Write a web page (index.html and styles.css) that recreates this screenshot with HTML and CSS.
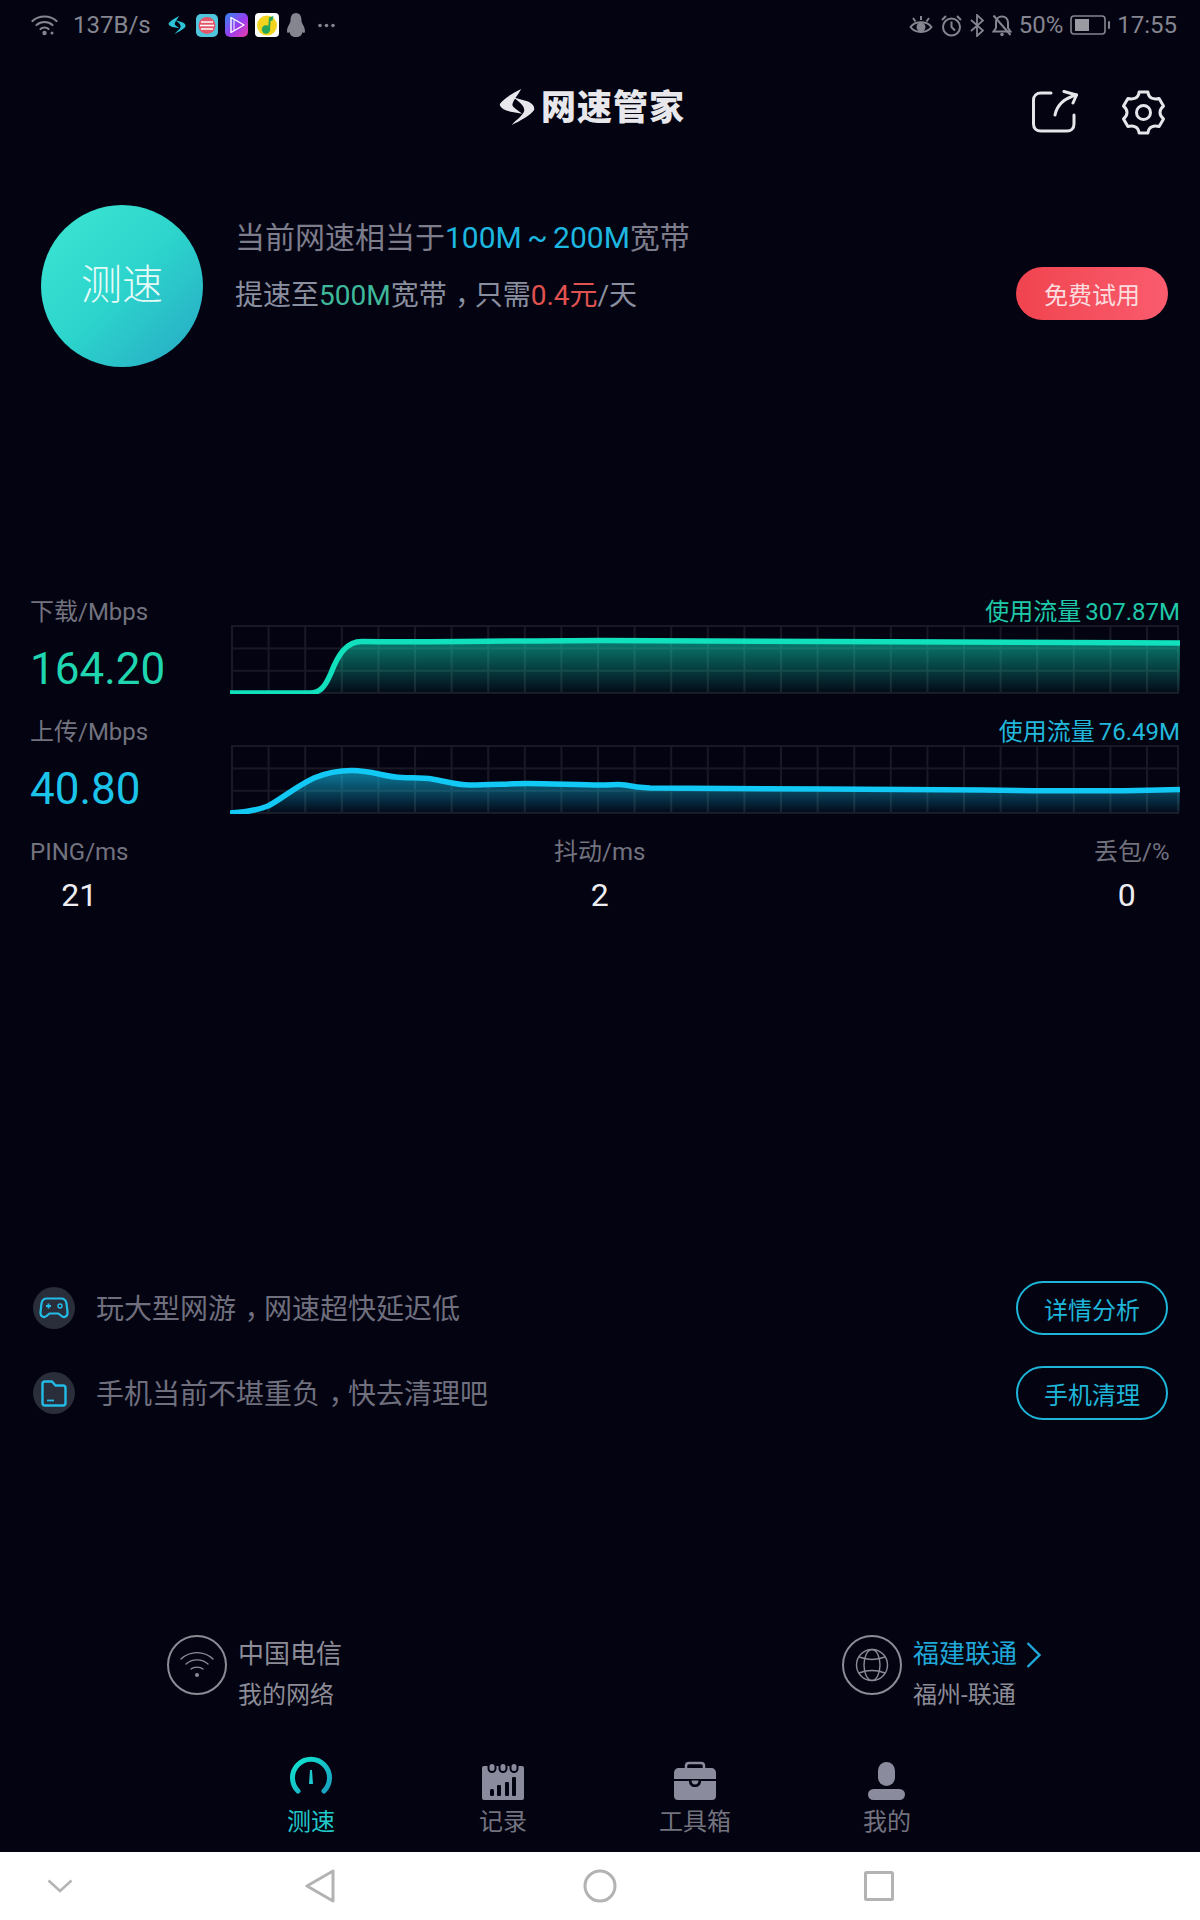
FILE: index.html
```html
<!DOCTYPE html>
<html lang="zh-CN">
<head>
    <meta charset="UTF-8">
    <meta name="viewport" content="width=device-width, initial-scale=1.0">
    <title>网速管家</title>
    <link rel="stylesheet" href="styles.css">
</head>
<body>
<div class="screen">

    <!-- status bar -->
    <div class="status-bar">
        <div class="status-left">
            <svg class="ic-wifi" width="27" height="22" viewBox="0 0 27 22" fill="none" stroke="#85858f" stroke-width="2.2" stroke-linecap="round">
                <path d="M1.5 7C8 1 19 1 25.5 7"/>
                <path d="M5.5 11C10 7 17 7 21.5 11"/>
                <path d="M9.5 15C11.5 13 15.5 13 17.5 15"/>
                <circle cx="13.5" cy="19" r="2.2" fill="#85858f" stroke="none"/>
                <circle cx="21" cy="19" r="1.5" fill="#85858f" stroke="none"/>
            </svg>
            <span class="net-speed">137B/s</span>
            <svg class="ic-mark-small" width="18" height="18" viewBox="0 0 34 35"><use href="#brand-mark"/></svg>
            <svg class="ic-app" width="22" height="23" viewBox="0 0 22 23">
                <rect width="22" height="23" rx="5" fill="#4fc6dc"/>
                <circle cx="11" cy="11.500" r="8.500" fill="#e4566a"/>
                <path d="M5 8H17M4 11.500H18M5 15H17" stroke="#fff" stroke-width="1.600"/>
            </svg>
            <svg class="ic-app" width="23" height="24" viewBox="0 0 23 24" fill="none">
                <defs>
                    <linearGradient id="video-grad" x1="0" y1="0" x2="1" y2="1">
                        <stop offset="0" stop-color="#2f86f0"/>
                        <stop offset="0.55" stop-color="#9a3cf0"/>
                        <stop offset="1" stop-color="#f03ca0"/>
                    </linearGradient>
                </defs>
                <rect width="23" height="24" rx="5" fill="url(#video-grad)"/>
                <path d="M6 4.500V19.500L19 12Z" stroke="#fff" stroke-width="1.400" stroke-linejoin="round"/>
                <path d="M9 6V18" stroke="#fff" stroke-width="1"/>
            </svg>
            <svg class="ic-app" width="24" height="24" viewBox="0 0 24 24">
                <rect width="24" height="24" rx="4" fill="#fff"/>
                <circle cx="12" cy="12.500" r="10" fill="#f2d31e"/>
                <circle cx="11" cy="16.500" r="4.200" fill="#25a55a"/>
                <path d="M13 16L14 4.500L18.500 3L17.500 7.500L15.500 8L15 16Z" fill="#25a55a"/>
            </svg>
            <svg class="ic-app" width="20" height="24" viewBox="0 0 20 24" fill="#85858f">
                <path d="M10 0C14.500 0 15.500 4 15.500 8C15.500 10 19 14 19 18C19 20 18 20.500 17 19.500L16.500 19C16 22 14 24 10 24C6 24 4 22 3.500 19L3 19.500C2 20.500 1 20 1 18C1 14 4.500 10 4.500 8C4.500 4 5.500 0 10 0Z"/>
            </svg>
            <svg class="ic-dots" width="17" height="5" viewBox="0 0 17 5" fill="#85858f">
                <circle cx="2" cy="2.500" r="1.800"/>
                <circle cx="8.500" cy="2.500" r="1.800"/>
                <circle cx="15" cy="2.500" r="1.800"/>
            </svg>
        </div>
        <div class="status-right">
            <svg width="24" height="22" viewBox="0 0 24 22" fill="none" stroke="#85858f" stroke-width="2">
                <path d="M1.500 13C6 6.500 18 6.500 22.500 13C18 19.500 6 19.500 1.500 13Z"/>
                <circle cx="12" cy="13" r="4.500" fill="#85858f" stroke="none"/>
                <path d="M4 4L6.500 7.500M20 4L17.500 7.500M12 2V6"/>
            </svg>
            <svg width="21" height="23" viewBox="0 0 21 23" fill="none" stroke="#85858f" stroke-width="2">
                <circle cx="10.500" cy="13" r="8.500"/>
                <path d="M10.500 7.500V13L14 16.500M1 6L5 2M20 6L16 2"/>
            </svg>
            <svg class="ic-bt" width="14" height="23" viewBox="0 0 14 23" fill="none" stroke="#85858f" stroke-width="1.800">
                <path d="M1 6L13 16.500L7 22V1L13 6.500L1 17"/>
            </svg>
            <svg class="ic-bell" width="20" height="23" viewBox="0 0 20 23" fill="none" stroke="#85858f" stroke-width="2">
                <path d="M4 8.500C4 5 6.500 2.500 10 2.500C13.500 2.500 16 5 16 9V14L18.500 17.500H1.500L4 14Z"/>
                <circle cx="10" cy="20.500" r="1.800" fill="#85858f" stroke="none"/>
                <path d="M1.500 1.500L18.500 21"/>
            </svg>
            <span class="battery-pct">50%</span>
            <svg class="ic-battery" width="40" height="20" viewBox="0 0 40 20" fill="none">
                <rect x="1" y="1" width="34" height="18" rx="3" stroke="#85858f" stroke-width="1.600"/>
                <rect x="5" y="4" width="14" height="12" fill="#9a9aa2"/>
                <rect x="38" y="6" width="2" height="8" rx="1" fill="#85858f"/>
            </svg>
            <span class="clock">17:55</span>
        </div>
    </div>

    <!-- title -->
    <div class="title-bar">
        <div></div>
        <div class="brand">
            <svg class="brand-icon" width="36" height="36" viewBox="0 0 34 35">
                <defs>
                    <symbol id="brand-mark" viewBox="0 0 34 35">
                        <path d="M21 0C13 4 4 9 0 15C2 20 7 21 11 22L22 24C17 20 13 18 12.500 15.500C13 11 18 6 21 0Z"/>
                        <path d="M13 8L27 12C32 14 34 17 34 20C30 26 20 31 12 35C16 30 22 27 24 21.500C25 17 19 12 13 8Z"/>
                    </symbol>
                </defs>
                <use href="#brand-mark"/>
            </svg>
            <span class="brand-name">网速管家</span>
        </div>
        <div class="title-actions">
            <svg width="46" height="43" viewBox="0 0 46 43" fill="none" stroke="#e6e6ea" stroke-width="3" stroke-linecap="round" stroke-linejoin="round">
                <path d="M19 3H9C4.500 3 1.500 6 1.500 10V34C1.500 38.500 4.500 41 9 41H35C39 41 42 38.500 42 34V25"/>
                <path d="M23 25C25 15 33 8 44.500 5"/>
                <path d="M32 1.500L44.500 5L41 13"/>
            </svg>
            <svg width="45" height="45" viewBox="0 0 45 45" fill="none" stroke="#e6e6ea" stroke-width="3" stroke-linejoin="round">
                <path d="M18.100 2L26.900 2Q27.500 6.800 30.750 8.200Q34 9.500 38.100 8.450L42.500 16Q39 19 39 22.500Q39 26 42.500 29L38.100 36.550Q34 35.500 30.750 36.800Q27.500 38.200 26.900 43L18.100 43Q17.500 38.200 14.250 36.800Q11 35.500 6.900 36.550L2.500 29Q6 26 6 22.500Q6 19 2.500 16L6.900 8.450Q11 9.500 14.250 8.200Q17.500 6.800 18.100 2Z"/>
                <circle cx="22.500" cy="22.500" r="7"/>
            </svg>
        </div>
    </div>

    <!-- promo -->
    <div class="promo">
        <div class="test-btn">测速</div>
        <div class="promo-text">
            <p class="promo-line1">当前网速相当于<span class="c-blue range">100M ~ 200M</span>宽带</p>
            <p class="promo-line2">提速至<span class="c-green">500M</span>宽带<span class="comma">，</span>只需<span class="c-red">0.4元</span>/天</p>
        </div>
        <button class="trial-btn">免费试用</button>
    </div>

    <!-- speed charts -->
    <div class="speed">
        <div class="speed-row">
            <div class="speed-info">
                <div class="label">下载/Mbps</div>
                <div class="speed-value c-down">164.20</div>
            </div>
            <div class="speed-chart">
                <div class="traffic c-down-text">使用流量 307.87M</div>
                <svg class="chart" width="950" height="69" viewBox="230 625 950 69" fill="none">
                    <defs>
                        <pattern id="grid-down" x="231" y="625" width="36.600" height="22.400" patternUnits="userSpaceOnUse">
                            <path d="M1 22.400V1H36.600" stroke="#191925" stroke-width="2"/>
                        </pattern>
                        <linearGradient id="fill-down" x1="0" y1="0" x2="0" y2="1">
                            <stop offset="0" stop-color="#0ee0be" stop-opacity="0.55"/>
                            <stop offset="1" stop-color="#0ee0be" stop-opacity="0.03"/>
                        </linearGradient>
                    </defs>
                    <rect x="232" y="626" width="946" height="67" fill="url(#grid-down)" stroke="#191925" stroke-width="2"/>
                    <path d="M310 693C320 693 325 687 331 673C338 655 346 641.500 362 641.500C420 642.500 480 641 600 640.500C700 641 900 642.500 1180 643V693Z" fill="url(#fill-down)"/>
                    <path d="M230 693H310C320 693 325 687 331 673C338 655 346 641.500 362 641.500C420 642.500 480 641 600 640.500C700 641 900 642.500 1180 643" stroke="#10e0bc" stroke-width="5.500"/>
                </svg>
            </div>
        </div>
        <div class="speed-row">
            <div class="speed-info">
                <div class="label">上传/Mbps</div>
                <div class="speed-value c-up">40.80</div>
            </div>
            <div class="speed-chart">
                <div class="traffic c-up-text">使用流量 76.49M</div>
                <svg class="chart" width="950" height="69" viewBox="230 745 950 69" fill="none">
                    <defs>
                        <pattern id="grid-up" x="231" y="745" width="36.600" height="22.400" patternUnits="userSpaceOnUse">
                            <path d="M1 22.400V1H36.600" stroke="#191925" stroke-width="2"/>
                        </pattern>
                        <linearGradient id="fill-up" gradientUnits="userSpaceOnUse" x1="0" y1="776" x2="0" y2="813">
                            <stop offset="0" stop-color="#12c8f4" stop-opacity="0.55"/>
                            <stop offset="1" stop-color="#12c8f4" stop-opacity="0.03"/>
                        </linearGradient>
                    </defs>
                    <rect x="232" y="746" width="946" height="67" fill="url(#grid-up)" stroke="#191925" stroke-width="2"/>
                    <path d="M230 813C245 812.500 255 811 268 806C280 800 295 787 314 778C328 772 340 770.500 352 770.500C372 770.500 385 777 402 777.500C415 778 425 778 432 779C445 781 455 785 470 785C490 785 510 783.500 528 783.500C550 783.500 580 785 600 785C612 785 620 784 625 785C635 787 640 787.500 650 788C720 789 900 789 983 790C1050 791 1120 791.500 1180 789.500V813Z" fill="url(#fill-up)"/>
                    <path d="M230 813C245 812.500 255 811 268 806C280 800 295 787 314 778C328 772 340 770.500 352 770.500C372 770.500 385 777 402 777.500C415 778 425 778 432 779C445 781 455 785 470 785C490 785 510 783.500 528 783.500C550 783.500 580 785 600 785C612 785 620 784 625 785C635 787 640 787.500 650 788C720 789 900 789 983 790C1050 791 1120 791.500 1180 789.500" stroke="#12c8f4" stroke-width="5.500"/>
                </svg>
            </div>
        </div>
    </div>

    <!-- ping / jitter / loss -->
    <div class="stats">
        <div class="stat">
            <div class="label">PING/ms</div>
            <div class="stat-value">21</div>
        </div>
        <div class="stat">
            <div class="label">抖动/ms</div>
            <div class="stat-value">2</div>
        </div>
        <div class="stat">
            <div class="label">丢包/%</div>
            <div class="stat-value stat-value-loss">0</div>
        </div>
    </div>

    <!-- tips -->
    <div class="tips">
        <div class="tip">
            <span class="tip-icon">
                <svg width="30" height="22" viewBox="0 0 30 22" fill="none" stroke="#22bce6" stroke-width="2.200" stroke-linejoin="round">
                    <path d="M8 1.500H22C25 1.500 27 3.500 27.500 6.500L28.500 15C29 19 25.500 21.500 22.500 19L19.500 16.500H10.500L7.500 19C4.500 21.500 1 19 1.500 15L2.500 6.500C3 3.500 5 1.500 8 1.500Z"/>
                    <path d="M7 9H12M9.500 6.500V11.500" stroke-width="1.800"/>
                    <circle cx="21" cy="9" r="2" stroke-width="1.400"/>
                </svg>
            </span>
            <span class="tip-text">玩大型网游<span class="comma">，</span>网速超快延迟低</span>
            <button class="outline-btn">详情分析</button>
        </div>
        <div class="tip">
            <span class="tip-icon">
                <svg width="26" height="27" viewBox="0 0 26 27" fill="none" stroke="#22bce6" stroke-width="2.400" stroke-linejoin="round">
                    <path d="M1.500 4C1.500 2.500 2.500 1.500 4 1.500H11L14.500 5.500H22C23.500 5.500 24.500 6.500 24.500 8V23C24.500 24.500 23.500 25.500 22 25.500H4C2.500 25.500 1.500 24.500 1.500 23Z"/>
                    <path d="M6 20.500H13" stroke-width="1.800"/>
                </svg>
            </span>
            <span class="tip-text">手机当前不堪重负<span class="comma">，</span>快去清理吧</span>
            <button class="outline-btn">手机清理</button>
        </div>
    </div>

    <!-- network -->
    <div class="network">
        <div class="net-item">
            <span class="net-icon">
                <svg width="36" height="28" viewBox="0 0 36 28" fill="none" stroke="#8c8c96" stroke-width="1.400" stroke-linecap="round">
                    <path d="M2 8C11 -0.500 25 -0.500 34 8"/>
                    <path d="M7 13C13 7.500 23 7.500 29 13"/>
                    <path d="M12 18C15 15.500 21 15.500 24 18"/>
                    <circle cx="18" cy="24" r="2" fill="#8c8c96" stroke="none"/>
                </svg>
            </span>
            <div class="net-text">
                <div class="net-name">中国电信</div>
                <div class="net-sub">我的网络</div>
            </div>
        </div>
        <div class="net-item">
            <span class="net-icon">
                <svg width="34" height="34" viewBox="0 0 34 34" fill="none" stroke="#8c8c96" stroke-width="1.400">
                    <circle cx="17" cy="17" r="15.500"/>
                    <ellipse cx="17" cy="17" rx="8" ry="15.500"/>
                    <path d="M4 9C12 12 22 12 30 9M4 25C12 22 22 22 30 25"/>
                </svg>
            </span>
            <div class="net-text">
                <div class="net-name c-server">福建联通
                    <svg class="net-arrow" width="15" height="26" viewBox="0 0 15 26" fill="none" stroke="#20a8d8" stroke-width="2.400">
                        <path d="M1.500 1L13.500 13L1.500 25"/>
                    </svg>
                </div>
                <div class="net-sub">福州-联通</div>
            </div>
        </div>
    </div>

    <!-- tabs -->
    <div class="tabs">
        <div class="tab tab-active">
            <svg class="tab-icon" width="42" height="44" viewBox="0 0 42 44" fill="none">
                <defs>
                    <linearGradient id="gauge-grad" x1="0" y1="0" x2="1" y2="1">
                        <stop offset="0" stop-color="#10e6d0"/>
                        <stop offset="1" stop-color="#1a9fc0"/>
                    </linearGradient>
                </defs>
                <path d="M8 35A18.500 18.500 0 1 1 34 35" stroke="url(#gauge-grad)" stroke-width="5" stroke-linecap="round"/>
                <path d="M20 14H22L23 28H19Z" fill="#20c8d0"/>
            </svg>
            <span>测速</span>
        </div>
        <div class="tab">
            <svg class="tab-icon" width="42" height="44" viewBox="0 0 42 44">
                <rect y="10" width="42" height="34" rx="2" fill="#8a8c9e"/>
                <g fill="#8a8c9e" stroke="#030312" stroke-width="2">
                    <rect x="6.500" y="7" width="7" height="9" rx="3.500"/>
                    <rect x="17.500" y="7" width="7" height="9" rx="3.500"/>
                    <rect x="28.500" y="7" width="7" height="9" rx="3.500"/>
                </g>
                <g fill="#030312">
                    <rect x="8" y="33" width="4" height="7" rx="1.500"/>
                    <rect x="15" y="29" width="4" height="11" rx="1"/>
                    <rect x="23" y="26" width="4" height="14" rx="1"/>
                    <rect x="30" y="21" width="4" height="19" rx="1"/>
                </g>
            </svg>
            <span>记录</span>
        </div>
        <div class="tab">
            <svg class="tab-icon" width="42" height="44" viewBox="0 0 42 44">
                <path d="M12 13V10C12 8 13.500 7 15 7H27C28.500 7 30 8 30 10V13" fill="none" stroke="#8a8c9e" stroke-width="2.500"/>
                <path d="M0 17C0 14 2 12 5 12H37C40 12 42 14 42 17V23H0Z" fill="#8a8c9e"/>
                <path d="M0 25H15C15 29 17.500 31 21 31C24.500 31 27 29 27 25H42V40C42 42.500 40.500 44 38 44H4C1.500 44 0 42.500 0 40Z" fill="#8a8c9e"/>
                <path d="M17.500 24.500H24.500C24.500 27 23 28.500 21 28.500C19 28.500 17.500 27 17.500 24.500Z" fill="#8a8c9e"/>
            </svg>
            <span>工具箱</span>
        </div>
        <div class="tab">
            <svg class="tab-icon" width="38" height="44" viewBox="0 0 38 44" fill="#8a8c9e">
                <rect x="10" y="6" width="17" height="24" rx="8.500"/>
                <rect y="33" width="37" height="11" rx="5.500"/>
            </svg>
            <span>我的</span>
        </div>
    </div>

    <!-- nav bar -->
    <div class="nav-bar">
        <svg class="nav-chevron" width="26" height="14" viewBox="0 0 26 14" fill="none" stroke="#b3b3b3" stroke-width="2.500">
            <path d="M1.500 1.500L13 12L24.500 1.500"/>
        </svg>
        <svg class="nav-back" width="30" height="34" viewBox="0 0 30 34" fill="none" stroke="#b3b3b3" stroke-width="3" stroke-linejoin="round">
            <path d="M28 2V32L2 17Z"/>
        </svg>
        <svg class="nav-home" width="34" height="34" viewBox="0 0 34 34" fill="none" stroke="#b3b3b3" stroke-width="3">
            <circle cx="17" cy="17" r="15"/>
        </svg>
        <svg class="nav-recent" width="30" height="30" viewBox="0 0 30 30" fill="none" stroke="#b3b3b3" stroke-width="3" stroke-linejoin="round">
            <rect x="1.500" y="1.500" width="27" height="27" rx="1"/>
        </svg>
    </div>
</div>
</body>
</html>
```

FILE: styles.css
```css
* {
    box-sizing: border-box;
}
html, body {
    margin: 0;
    padding: 0;
}
body {
    font-family: Roboto, "Noto Sans CJK SC", sans-serif;
    background-color: #030312;
    color: #73737f;
}
p {
    margin: 0;
}
svg {
    display: block;
    flex: none;
}
button {
    font-family: inherit;
    cursor: pointer;
}
.screen {
    width: 1200px;
    height: 1920px;
    overflow: hidden;
    display: flex;
    flex-direction: column;
}
.screen > div {
    flex: none;
}

.c-blue { color: #1db7e0; }
.c-green { color: #3fb89a; }
.c-red { color: #e0524f; }
.c-down { color: #1fd6b0; }
.c-up { color: #1cc4ea; }
.c-down-text { color: #1fc8a8; }
.c-up-text { color: #22b8dc; }
.c-server { color: #20a8d8; }

/* the comma sits in the middle of its square in the reference font */
.comma {
    font-feature-settings: "halt";
    padding: 0 0.2em 0 0.3em;
}

/* status bar */
.status-bar {
    height: 50px;
    padding: 0 23px 0 31px;
    display: flex;
    justify-content: space-between;
    align-items: center;
    font-size: 24px;
    color: #85858f;
}
.status-left, .status-right {
    display: flex;
    align-items: center;
}
.net-speed {
    margin: 0 17px 0 15px;
    line-height: 50px;
}
.status-left .ic-app {
    margin-left: 7px;
}
.status-left .ic-mark-small {
    color: #2cc3d6;
    fill: currentColor;
    margin-right: 3px;
}
.ic-dots {
    margin-left: 12px;
}
.status-right svg {
    margin-right: 8px;
}
.status-right .ic-bell {
    margin-right: 7px;
}
.battery-pct {
    margin-right: 7px;
}
.status-right .ic-battery {
    margin-right: 7px;
}

/* title */
.title-bar {
    height: 114px;
    padding: 0 34px 0 18px;
    display: grid;
    grid-template-columns: 1fr auto 1fr;
    align-items: center;
}
.brand {
    display: flex;
    align-items: center;
    gap: 6px;
    color: #e8e8ec;
    fill: currentColor;
}
.brand-name {
    font-size: 35px;
    font-weight: 900;
    line-height: 40px;
    letter-spacing: 1px;
    padding-top: 4px;
}
.title-actions {
    display: flex;
    justify-content: flex-end;
    gap: 43px;
    padding-top: 10px;
}

/* promo */
.promo {
    margin-top: 41px;
    height: 163px;
    padding: 0 32px 0 41px;
    display: flex;
}
.test-btn {
    width: 162px;
    height: 162px;
    border-radius: 50%;
    background: linear-gradient(135deg, #3de6d2 0%, #2cd4cc 50%, #27a8c4 100%);
    color: #e6fbf8;
    font-size: 41px;
    font-weight: 300;
    display: flex;
    align-items: center;
    justify-content: center;
    padding-bottom: 10px;
}
.promo-text {
    margin-left: 32px;
    flex: 1;
}
.promo-line1 {
    font-size: 30px;
    line-height: 56px;
    margin-top: 5px;
    color: #7d7d8b;
}
.range {
    word-spacing: -2px;
}
.promo-line2 {
    font-size: 28px;
    line-height: 56px;
    margin-top: 2px;
    color: #8a8f9f;
}
.trial-btn {
    width: 152px;
    height: 53px;
    margin-top: 62px;
    border: none;
    border-radius: 27px;
    background: linear-gradient(90deg, #f0444f, #fa5c6e);
    color: #fbdcdf;
    font-size: 24px;
    padding: 0;
}

/* speed */
.speed {
    margin-top: 227px;
}
.speed-row {
    height: 120px;
    padding-right: 20px;
    display: flex;
}
.label {
    font-size: 24px;
    line-height: 34px;
    color: #73737f;
}
.speed-info {
    width: 230px;
    padding-left: 30px;
}
.speed-value {
    font-size: 44px;
    line-height: 50px;
    margin-top: 15px;
}
.speed-chart {
    width: 950px;
    padding-top: 4px;
}
.traffic {
    font-size: 24px;
    line-height: 26px;
    text-align: right;
    word-spacing: -2px;
}

/* stats */
.stats {
    padding-left: 30px;
    display: grid;
    grid-template-columns: 524px 540px auto;
}
.stat {
    justify-self: start;
    text-align: center;
}
.stat-value {
    font-size: 32px;
    line-height: 40px;
    margin-top: 6px;
    color: #eeeef2;
}
.stat-value-loss {
    padding-right: 10px;
}

/* tips */
.tips {
    margin-top: 366px;
    padding: 0 32px 0 33px;
    display: flex;
    flex-direction: column;
    gap: 31px;
}
.tip {
    height: 54px;
    display: flex;
    align-items: center;
}
.tip-icon {
    width: 42px;
    height: 42px;
    border-radius: 50%;
    background-color: #2a2d3a;
    display: flex;
    align-items: center;
    justify-content: center;
}
.tip-text {
    flex: 1;
    margin-left: 21px;
    padding-bottom: 2px;
    font-size: 28px;
    color: #6f6f7d;
}
.outline-btn {
    width: 152px;
    height: 54px;
    border: 2px solid #1fb5d8;
    border-radius: 27px;
    background: none;
    color: #1fb5d8;
    font-size: 24px;
    padding: 0;
}

/* network */
.network {
    margin-top: 214px;
    height: 82px;
    padding-left: 167px;
    display: grid;
    grid-template-columns: 675px auto;
}
.net-item {
    display: flex;
    gap: 11px;
}
.net-icon {
    width: 60px;
    height: 60px;
    margin-top: 1px;
    border: 2px solid #8c8c96;
    border-radius: 50%;
    display: flex;
    align-items: center;
    justify-content: center;
}
.net-text {
    line-height: 41px;
}
.net-name {
    font-size: 26px;
    color: #8c8c96;
    display: flex;
    align-items: center;
    gap: 9px;
}
.net-name.c-server {
    color: #20a8d8;
}
.net-sub {
    font-size: 24px;
    line-height: 40px;
    color: #8c8c96;
}

/* tabs */
.tabs {
    margin-top: 40px;
    height: 96px;
    padding: 0 217px 0 215px;
    display: grid;
    grid-template-columns: repeat(4, 192px);
}
.tab {
    display: flex;
    flex-direction: column;
    align-items: center;
    font-size: 24px;
    line-height: 30px;
    color: #73737f;
}
.tab span {
    margin-top: 7px;
}
.tab-active {
    color: #22c8c8;
}

/* nav bar */
.nav-bar {
    height: 68px;
    background-color: #fff;
    display: flex;
    align-items: center;
}
.nav-chevron {
    margin-left: 47px;
}
.nav-back {
    margin-left: 232px;
}
.nav-home {
    margin-left: 248px;
}
.nav-recent {
    margin-left: 247px;
}
```
